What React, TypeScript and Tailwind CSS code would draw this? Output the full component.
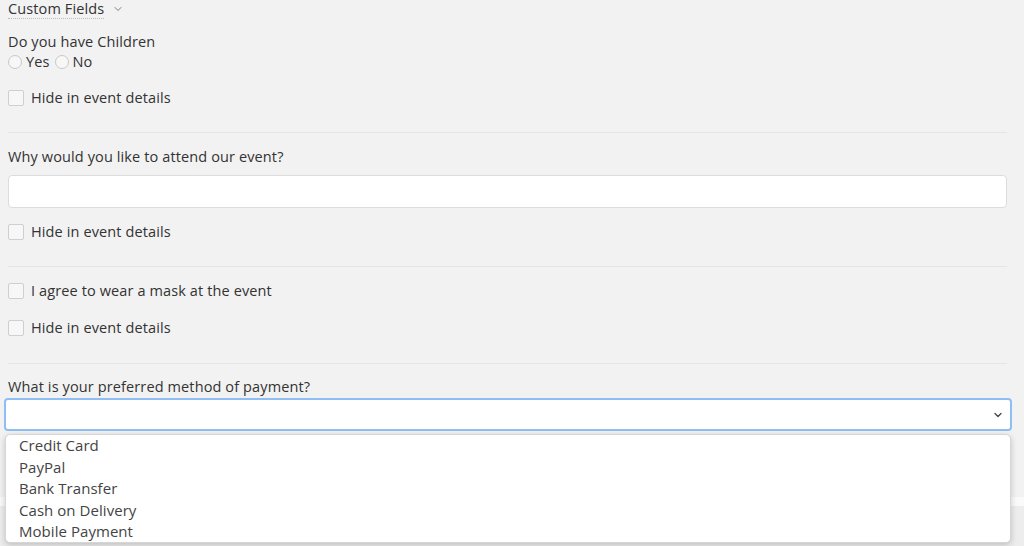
import { ChevronDown } from 'lucide-react';

const font = { fontFamily: '"Open Sans", "Liberation Sans", sans-serif', letterSpacing: '0.12px' };

function Checkbox({ label }: { label: string }) {
  return (
    <label className="flex items-center gap-[7px] h-[20px]">
      <span className="block w-[16px] h-[16px] rounded-[2px] border border-[#cfcfcf] bg-[#f7f7f7]" />
      <span className="text-[14.5px] text-[#333]">{label}</span>
    </label>
  );
}

function Divider() {
  return <div className="h-px bg-[#e2e5ea]" />;
}

const options = ['Credit Card', 'PayPal', 'Bank Transfer', 'Cash on Delivery', 'Mobile Payment'];

export default function App() {
  return (
    <div className="relative w-[1024px] h-[546px] overflow-hidden bg-[#f2f2f2] text-[#333]" style={font}>
      <div className="px-[8px] w-[1015px]">
        <div className="flex items-center gap-[8px] h-[18px]">
          <span className="text-[14.5px] leading-[18px] border-b border-dotted border-[#bbb]">Custom Fields</span>
          <ChevronDown size={12} strokeWidth={1.5} className="text-[#555]" />
        </div>

        <div className="mt-[14px] text-[14.5px] leading-[20px]">Do you have Children</div>
        <div className="flex items-center h-[20px] text-[14.5px]">
          <span className="w-[14px] h-[14px] rounded-full border border-[#c8c8c8] bg-[#f7f7f7]" />
          <span className="ml-[4px]">Yes</span>
          <span className="ml-[5px] w-[14px] h-[14px] rounded-full border border-[#c8c8c8] bg-[#f7f7f7]" />
          <span className="ml-[4px]">No</span>
        </div>
        <div className="mt-[16px]">
          <Checkbox label="Hide in event details" />
        </div>

        <div className="mt-[24px]">
          <Divider />
        </div>

        <div className="mt-[14px] text-[14.5px] leading-[20px]">Why would you like to attend our event?</div>
        <div className="mt-[8px] h-[33px] bg-white border border-[#dcdcdc] rounded-[4px]" />
        <div className="mt-[14px]">
          <Checkbox label="Hide in event details" />
        </div>

        <div className="mt-[24px]">
          <Divider />
        </div>

        <div className="mt-[14px]">
          <Checkbox label="I agree to wear a mask at the event" />
        </div>
        <div className="mt-[17px]">
          <Checkbox label="Hide in event details" />
        </div>

        <div className="mt-[25px]">
          <Divider />
        </div>

        <div className="mt-[13px] text-[14.5px] leading-[20px]">What is your preferred method of payment?</div>
      </div>

      <div className="mx-[4px] mt-[1px] w-[1008px] h-[33px] bg-white rounded-[4px] border-2 border-[#8fbef5] flex items-center justify-end pr-[6px]">
        <ChevronDown size={12} strokeWidth={2.5} className="text-[#444]" />
      </div>

      <div className="absolute left-0 right-0 top-[497px] h-[9px] bg-[#fafafa]" />
      <div className="absolute left-0 right-0 top-[506px] bottom-0 bg-[#ededed]" />

      <div className="absolute left-[5px] top-[434px] w-[1006px] h-[109px] bg-white rounded-[5px] border border-[#d6d6d6] shadow-[0_2px_6px_rgba(0,0,0,0.2)]">
        {options.map((o) => (
          <div key={o} className="pl-[13px] h-[21.5px] leading-[21.5px] text-[15px] text-[#444]" style={{ letterSpacing: '0.05px' }}>
            {o}
          </div>
        ))}
      </div>
    </div>
  );
}
